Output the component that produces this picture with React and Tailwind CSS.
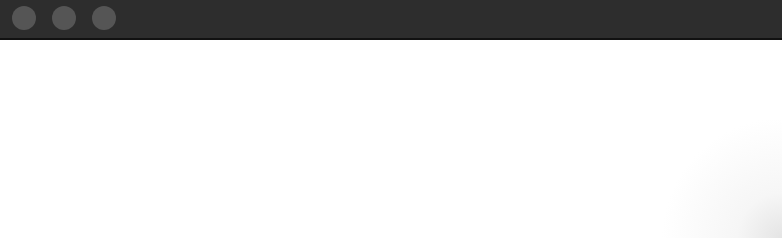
export default function App() {
  return (
    <div className="w-[782px] h-[238px] flex flex-col bg-white overflow-hidden">
      <div className="h-[38px] shrink-0 bg-[#2d2d2d] border-b-2 border-[#111] flex items-start pt-[6px] gap-4 px-3 box-border h-[40px]">
        <span className="w-6 h-6 rounded-full bg-[#555]" />
        <span className="w-6 h-6 rounded-full bg-[#555]" />
        <span className="w-6 h-6 rounded-full bg-[#555]" />
      </div>
      <div className="flex-1 bg-[radial-gradient(circle_at_100%_100%,#e4e4e4_0px,#f6f6f6_45px,#ffffff_120px)]" />
    </div>
  );
}
